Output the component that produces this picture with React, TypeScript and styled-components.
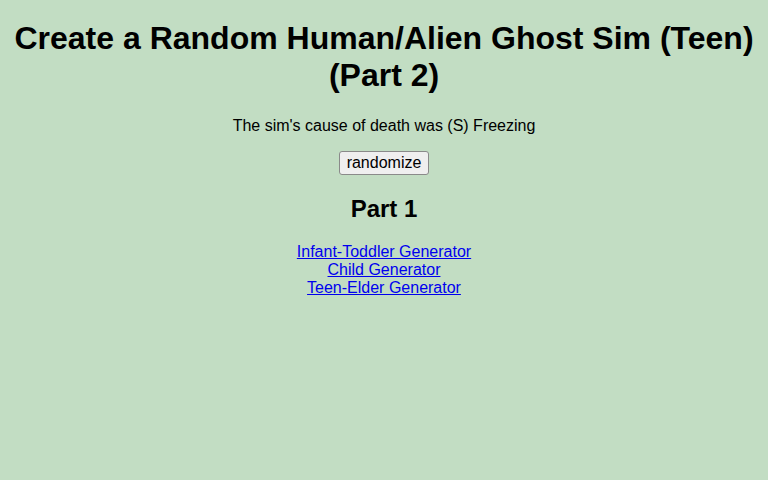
import React from "react";
import styled, { createGlobalStyle } from "styled-components";

const GlobalStyle = createGlobalStyle`
  html, body {
    margin: 0;
    padding: 0;
    background: #c2ddc3;
  }
  body {
    font-family: "Liberation Sans", Arial, sans-serif;
    color: #000;
  }
`;

const Page = styled.main`
  text-align: center;
  padding: 0.1px 8px;
`;

const Title = styled.h1`
  font-size: 32px;
  font-weight: bold;
  margin: 19.44px 0 23.44px;
`;

const Result = styled.p`
  font-size: 16px;
  margin: 16px 0;
`;

const Button = styled.button`
  font-family: "Liberation Sans", Arial, sans-serif;
  font-size: 16px;
  color: #000;
  background: #efefef;
  border: 1px solid #8a8a8a;
  border-radius: 3px;
  padding: 2px 7px;
  line-height: normal;
  cursor: pointer;
`;

const Heading = styled.h2`
  font-size: 24px;
  font-weight: bold;
  margin: 19.92px 0;
`;

const Links = styled.div`
  display: flex;
  flex-direction: column;
  align-items: center;
  font-size: 16px;
  line-height: normal;
`;

const Link = styled.a`
  color: #0000ee;
  text-decoration: underline;
`;

const causes = [
  "(S) Freezing",
  "(S) Burning",
  "(S) Drowning",
  "(S) Electrocution",
  "(S) Starvation",
  "(S) Old Age",
];

export default function App() {
  const [cause, setCause] = React.useState(causes[0]);
  const randomize = () =>
    setCause(causes[Math.floor(Math.random() * causes.length)]);

  return (
    <>
      <GlobalStyle />
      <Page>
        <Title>Create a Random Human/Alien Ghost Sim (Teen) (Part 2)</Title>
        <Result>The sim's cause of death was {cause}</Result>
        <Result>
          <Button onClick={randomize}>randomize</Button>
        </Result>
        <Heading>Part 1</Heading>
        <Links>
          <Link href="#">Infant-Toddler Generator</Link>
          <Link href="#">Child Generator</Link>
          <Link href="#">Teen-Elder Generator</Link>
        </Links>
      </Page>
    </>
  );
}
